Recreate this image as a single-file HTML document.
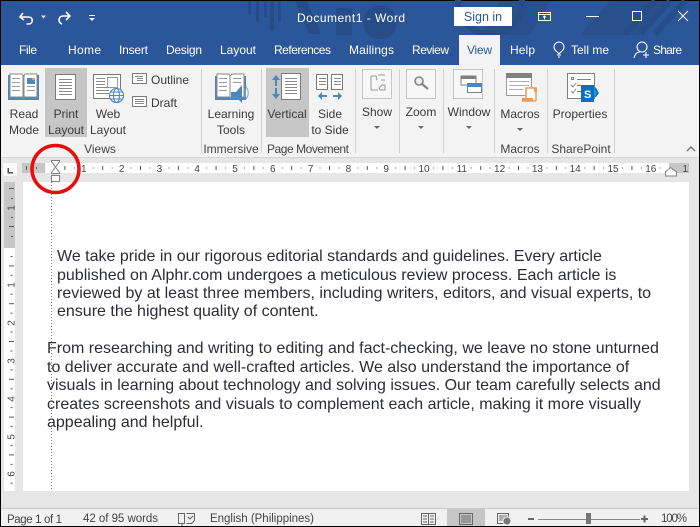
<!DOCTYPE html>
<html><head><meta charset="utf-8"><title>Document1 - Word</title>
<style>
html,body{margin:0;padding:0;background:#000;width:700px;height:527px;overflow:hidden}
svg{display:block;position:absolute;left:0;top:0}
text{font-family:"Liberation Sans",sans-serif;font-size:12px;fill:#3a3a3a}
.t{fill:#fff;font-size:12px}
.c{text-anchor:middle}
.g{font-size:12px;fill:#444}
.b{font-size:16px;fill:#2c2c38}
.s{font-size:11.500px;fill:#444}
.r{font-size:10px;fill:#444;text-anchor:middle}
.ic{fill:none;stroke:#7a7a7a;stroke-width:1}
.bl{fill:#4f86bd}
</style></head><body>
<svg width="700" height="527" viewBox="0 0 700 527" xmlns="http://www.w3.org/2000/svg" shape-rendering="crispEdges">
<defs>
<pattern id="ht" x="46" y="163" width="37.8" height="10" patternUnits="userSpaceOnUse">
<rect x="9" y="4.500" width="1" height="1" fill="#555"/><rect x="18.500" y="3" width="1" height="4" fill="#555"/><rect x="28" y="4.500" width="1" height="1" fill="#555"/>
</pattern>
<pattern id="vt" x="6" y="247" width="12" height="37.8" patternUnits="userSpaceOnUse">
<rect x="4.500" y="9" width="2" height="1" fill="#555"/><rect x="3" y="18.500" width="5" height="1" fill="#555"/><rect x="4.500" y="28" width="2" height="1" fill="#555"/>
</pattern>
</defs>
<rect x="1" y="1" width="698" height="525" fill="#e6e6e6"/>
<!-- title -->
<rect x="1" y="1" width="698" height="64" fill="#2b579a"/>
<g fill="#264d88">
<rect x="248" y="1" width="3" height="14"/><rect x="256" y="1" width="3" height="20"/><rect x="264" y="1" width="3" height="16"/><rect x="270" y="1" width="4" height="30"/><rect x="278" y="1" width="3" height="21"/><path d="M295 1h12l14 33h-12z" shape-rendering="auto"/><path d="M336 8h16v27h-16z"/>
<circle cx="380" cy="22" r="17" shape-rendering="auto"/>
<path d="M500 1h50l-20 34h-50zM610 1h60l-30 34h-60z" shape-rendering="auto" opacity=".7"/>
</g>
<g fill="none" stroke="#264d88" stroke-width="6" shape-rendering="auto"><circle cx="490" cy="2" r="32"/><path d="M640 34l30-33M655 34l30-33M625 34l30-33"/></g>
<g fill="none" stroke="#fff" stroke-width="1.600" shape-rendering="auto">
<path d="M23 13l-3 4 4 3"/><path d="M20.500 17h8c5 0 5 7 0 7h-2"/>
<path d="M66 12l4 4-4 4"/><path d="M69 16h-6c-5 0-5 7-1 8"/>
</g>
<path d="M41 15.500h5l-2.500 3z" fill="#dfe6f0" shape-rendering="auto"/>
<g fill="#fff"><rect x="89" y="15" width="6" height="1"/><path d="M89 18h6l-3 3z" shape-rendering="auto"/></g>
<text class="t" x="297" y="22" textLength="108">Document1  -  Word</text>
<rect x="454" y="7" width="58" height="19" fill="#fff"/>
<text class="c" x="483" y="21" style="fill:#2b579a;font-size:12.500px">Sign in</text>
<g fill="none" stroke="#fff"><rect x="538.500" y="12.500" width="12" height="8"/><path d="M538 14.500h13M544.500 19.500v-3M543 17.500l1.500-1.500 1.500 1.500"/>
<path d="M586 16.500h13"/><rect x="632.500" y="11.500" width="9" height="9" stroke-width="1"/><path d="M678 11l10 10M688 11l-10 10" shape-rendering="auto"/></g>
<!-- tabs -->
<rect x="1" y="65" width="698" height="92" fill="#f3f3f3"/>
<rect x="459" y="35" width="41" height="30" fill="#f3f3f3"/>
<g class="tabs">
<text class="t" x="19" y="54" textLength="18">File</text>
<text class="t" x="68" y="54" textLength="33">Home</text>
<text class="t" x="119" y="54" textLength="29">Insert</text>
<text class="t" x="166" y="54" textLength="36">Design</text>
<text class="t" x="220" y="54" textLength="36">Layout</text>
<text class="t" x="274" y="54" textLength="57">References</text>
<text class="t" x="349" y="54" textLength="45">Mailings</text>
<text class="t" x="412" y="54" textLength="37">Review</text>
<text x="467" y="54" textLength="25" style="fill:#2b579a">View</text>
<text class="t" x="510" y="54" textLength="25">Help</text>
<text class="t" x="571" y="54" textLength="38">Tell me</text>
<text class="t" x="653" y="54" textLength="29">Share</text>
</g>
<g fill="none" stroke="#fff" stroke-width="1.100" shape-rendering="auto">
<path d="M559 54c-1-2-5-3-5-7a5 5 0 0 1 10 0c0 4-4 5-5 7zM557 55h4M558 57h2"/>
<circle cx="642" cy="47" r="5"/><path d="M634 58c1-4 3-6 6-6"/><path d="M643 55h6M646 52v6"/>
</g>
<!-- selected -->
<rect x="45" y="68" width="42" height="69" fill="#c6c6c6"/>
<rect x="266" y="68" width="43" height="69" fill="#c6c6c6"/>
<!-- separators -->
<g fill="#d0d0d0"><rect x="201" y="69" width="1" height="84"/><rect x="261" y="69" width="1" height="84"/><rect x="355" y="69" width="1" height="84"/><rect x="399" y="69" width="1" height="84"/><rect x="443" y="69" width="1" height="84"/><rect x="494" y="69" width="1" height="84"/><rect x="547" y="69" width="1" height="84"/><rect x="614" y="69" width="1" height="84"/></g>
<rect x="1" y="157" width="698" height="1" fill="#d4d4d4"/>
<!-- read mode icon -->
<rect x="8" y="75" width="31" height="25" class="bl"/>
<path d="M10 74h12l1 2v22l-1-1H10zM37 74H25l-1 2v22l1-1h12z" fill="#fff" stroke="#888"/>
<g fill="#9a9a9a"><rect x="12" y="78" width="8" height="1"/><rect x="12" y="82" width="8" height="1"/><rect x="12" y="86" width="8" height="1"/><rect x="12" y="90" width="8" height="1"/><rect x="27" y="86" width="8" height="1"/><rect x="27" y="90" width="8" height="1"/></g>
<rect x="27" y="78" width="8" height="6" fill="#4f86bd"/><rect x="32" y="78" width="3" height="2" fill="#ed9a58"/>
<!-- print icon -->
<rect x="55.500" y="74.500" width="20" height="25" fill="#fff" stroke="#7a7a7a"/>
<g fill="#8a8a8a"><rect x="59" y="79" width="13" height="1"/><rect x="59" y="82" width="13" height="1"/><rect x="59" y="85" width="13" height="1"/><rect x="59" y="88" width="13" height="1"/><rect x="59" y="91" width="13" height="1"/><rect x="59" y="94" width="13" height="1"/></g>
<!-- web icon -->
<rect x="93.500" y="74.500" width="27" height="24" fill="#fff" stroke="#7a7a7a"/>
<rect x="107.500" y="77.500" width="10" height="10" fill="#fff" stroke="#9a9a9a"/>
<g fill="#8a8a8a"><rect x="96" y="78" width="9" height="1"/><rect x="96" y="81" width="9" height="1"/><rect x="96" y="84" width="9" height="1"/><rect x="96" y="87" width="13" height="1"/><rect x="96" y="90" width="13" height="1"/><rect x="96" y="93" width="13" height="1"/></g>
<g shape-rendering="auto" fill="#fff" stroke="#4f86bd" stroke-width="1.100"><circle cx="116.500" cy="95.500" r="7"/><ellipse cx="116.500" cy="95.500" rx="3" ry="7"/><path d="M109.500 95.500h14M110.500 92h12M110.500 99h12"/></g>
<!-- outline / draft -->
<rect x="132.500" y="73.500" width="14" height="10" fill="#fff" stroke="#7a7a7a"/>
<g fill="#8a8a8a"><rect x="135" y="76" width="8" height="1"/><rect x="137" y="78" width="6" height="1"/><rect x="137" y="80" width="6" height="1"/></g>
<rect x="132.500" y="96.500" width="14" height="10" fill="#fff" stroke="#7a7a7a"/>
<g fill="#8a8a8a"><rect x="135" y="99" width="9" height="1"/><rect x="135" y="101" width="9" height="1"/><rect x="135" y="103" width="9" height="1"/></g>
<!-- learning tools -->
<rect x="215" y="76" width="31" height="24" class="bl"/>
<path d="M217 74h12l1 2v22l-1-1h-12zM244 74h-12l-2 2v22l2-1h12z" fill="#fff" stroke="#888"/>
<g fill="#9a9a9a"><rect x="219" y="78" width="8" height="1"/><rect x="219" y="82" width="8" height="1"/><rect x="219" y="86" width="8" height="1"/><rect x="219" y="90" width="8" height="1"/><rect x="233" y="78" width="8" height="1"/><rect x="233" y="82" width="8" height="1"/></g>
<path d="M231 92h5l6-7v18l-6-6h-5z" fill="#4f86bd" shape-rendering="auto"/>
<path d="M244 89c2 2 2 6 0 8M246 87c3 3 3 9 0 12" fill="none" stroke="#7aa3cb" stroke-width="1" shape-rendering="auto"/>
<!-- vertical -->
<path d="M276 75l-4 5h3v6h2v-6h3zM276 99l-4-5h3v-6h2v6h3z" fill="#4f86bd" shape-rendering="auto"/>
<rect x="281.500" y="73.500" width="19" height="26" fill="#fff" stroke="#7a7a7a"/>
<g fill="#8a8a8a"><rect x="285" y="78" width="12" height="1"/><rect x="285" y="81" width="12" height="1"/><rect x="285" y="84" width="12" height="1"/><rect x="285" y="87" width="12" height="1"/><rect x="285" y="90" width="12" height="1"/><rect x="285" y="93" width="12" height="1"/></g>
<!-- side to side -->
<rect x="316.500" y="74.500" width="11" height="15" fill="#fff" stroke="#7a7a7a"/><rect x="331.500" y="74.500" width="11" height="15" fill="#fff" stroke="#7a7a7a"/>
<g fill="#8a8a8a"><rect x="319" y="78" width="7" height="1"/><rect x="319" y="81" width="7" height="1"/><rect x="319" y="84" width="7" height="1"/><rect x="334" y="78" width="7" height="1"/><rect x="334" y="81" width="7" height="1"/><rect x="334" y="84" width="7" height="1"/></g>
<path d="M318 96l4-4v3h5v2h-5v3zM342 96l-4-4v3h-5v2h5v3z" fill="#4f86bd" shape-rendering="auto"/>
<!-- show/zoom/window -->
<g fill="#f7f7f7" stroke="#c6c6c6"><rect x="362.500" y="69.500" width="29" height="29"/><rect x="406.500" y="69.500" width="29" height="29"/><rect x="453.500" y="69.500" width="29" height="29"/></g>
<path d="M371 76h5l1 3-1 1M371 76v14h7M378 75h7M381 80h4M385 85v5h-5l-1-2 3-3z" fill="none" stroke="#9a9a9a" shape-rendering="auto"/>
<circle cx="419" cy="81" r="4" fill="#eee" stroke="#858585" stroke-width="1.600" shape-rendering="auto"/><path d="M422 84l6 5" stroke="#858585" stroke-width="2.200" shape-rendering="auto"/>
<rect x="461" y="76" width="15" height="9" fill="#fff" stroke="#808080"/><rect x="461" y="76" width="15" height="3" fill="#808080"/>
<rect x="467.500" y="83.500" width="14" height="9" fill="#fff" stroke="#808080"/><rect x="467" y="83" width="15" height="4" fill="#4f86bd"/>
<g fill="#666" shape-rendering="auto"><path d="M374 126h6l-3 3zM418 126h6l-3 3zM466 126h6l-3 3zM517 128h6l-3 3z"/></g>
<!-- macros -->
<rect x="506.500" y="74.500" width="25" height="21" fill="#fff" stroke="#9a9a9a"/><rect x="506" y="73" width="26" height="5" fill="#808080"/>
<g fill="#b0b0b0"><rect x="509" y="81" width="20" height="1"/><rect x="509" y="85" width="20" height="1"/><rect x="509" y="89" width="14" height="1"/></g>
<path d="M526 88h10v12c0 1-1 1-2 1h-11c1-1 3-1 3-3z" fill="#fff" stroke="#ed9a58" stroke-width="1.500" shape-rendering="auto"/>
<rect x="522" y="98" width="11" height="3" fill="#ed9a58"/><rect x="534" y="88" width="3" height="4" fill="#ed9a58"/>
<!-- properties -->
<rect x="567.500" y="73.500" width="27" height="25" fill="#fff" stroke="#808080"/>
<g fill="none" stroke="#808080"><rect x="571.500" y="77.500" width="2" height="2"/><path d="M577 79.500h14M577 85.500h14M577 91.500h8"/></g>
<path d="M571 85l2 2 3-4M571 91l2 2 3-4" fill="none" stroke="#888" shape-rendering="auto"/>
<path d="M591 87h4l2 2 0 2 1 1-3 4-3 2z" fill="#1a9cd6" shape-rendering="auto"/>
<rect x="581" y="85" width="13" height="17" fill="#0a6fc2"/>
<text x="584" y="98" style="font-size:11px;font-weight:bold;fill:#fff">S</text>
<path d="M595 88l3 5-3 4" fill="none" stroke="#0a6fc2" stroke-width="1.500" shape-rendering="auto"/>
<!-- ribbon labels -->
<text class="c" x="24" y="118">Read</text><text class="c" x="24" y="134">Mode</text>
<text class="c" x="66" y="118">Print</text><text class="c" x="66" y="134">Layout</text>
<text class="c" x="108" y="118">Web</text><text class="c" x="108" y="134">Layout</text>
<text x="151" y="84">Outline</text><text x="151" y="107">Draft</text>
<text class="g c" x="100" y="153">Views</text>
<text class="c" x="231" y="118">Learning</text><text class="c" x="231" y="134">Tools</text>
<text class="g c" x="231" y="153">Immersive</text>
<text class="c" x="287" y="118">Vertical</text>
<text class="c" x="330" y="118">Side</text><text class="c" x="330" y="134">to Side</text>
<text class="g" x="267" y="153" textLength="82">Page Movement</text>
<text class="c" x="377" y="116">Show</text><text class="c" x="421" y="116">Zoom</text><text class="c" x="469" y="116">Window</text>
<text class="c" x="520" y="118">Macros</text><text class="c" x="580" y="118">Properties</text>
<text class="g c" x="520" y="153">Macros</text><text class="g c" x="581" y="153">SharePoint</text>
<path d="M687 151l4-4 4 4" fill="none" stroke="#777" stroke-width="1.500" shape-rendering="auto"/>
<!-- rulers -->
<rect x="3" y="163" width="14" height="13" fill="#fafafa"/><path d="M8 168v4.500h5" fill="none" stroke="#555" stroke-width="1.500"/>
<rect x="22" y="163" width="667" height="10" fill="#fff"/>
<rect x="22" y="163" width="23" height="10" fill="#c6c6c6"/>
<rect x="46" y="163" width="623" height="10" fill="url(#ht)"/>
<rect x="669" y="163" width="20" height="10" fill="#c6c6c6"/>
<g fill="#555"><rect x="26" y="166" width="1" height="4"/><rect x="31" y="166" width="1" height="4"/><rect x="36" y="167" width="1" height="2"/></g>
<g class="rn">
<text class="r" x="83.800" y="172">1</text><text class="r" x="121.600" y="172">2</text><text class="r" x="159.400" y="172">3</text><text class="r" x="197.200" y="172">4</text><text class="r" x="235" y="172">5</text><text class="r" x="272.800" y="172">6</text><text class="r" x="310.600" y="172">7</text><text class="r" x="348.400" y="172">8</text><text class="r" x="386.200" y="172">9</text><text class="r" x="424" y="172">10</text><text class="r" x="461.800" y="172">11</text><text class="r" x="499.600" y="172">12</text><text class="r" x="537.400" y="172">13</text><text class="r" x="575.200" y="172">14</text><text class="r" x="613" y="172">15</text><text class="r" x="650.800" y="172">16</text><text class="r" x="688" y="172">17</text>
</g>
<rect x="689" y="163" width="11" height="11" fill="#e6e6e6"/>
<rect x="699" y="1" width="1" height="526" fill="#000"/>
<path d="M670.500 167.500l-5 4.500v4h11v-4z" fill="#fff" stroke="#808080"/>
<!-- page -->
<rect x="23" y="182" width="666" height="309" fill="#fff"/>
<rect x="4" y="182" width="11" height="66" fill="#c6c6c6"/><rect x="4" y="248" width="11" height="243" fill="#fff"/>
<rect x="4" y="248" width="11" height="243" fill="url(#vt)"/>
<g fill="#555"><rect x="9" y="188" width="5" height="1"/><rect x="11" y="198" width="2" height="1"/><rect x="11" y="217" width="2" height="1"/><rect x="9" y="226" width="5" height="1"/><rect x="11" y="236" width="2" height="1"/></g>
<g><text class="r" transform="translate(14.500 208) rotate(-90)">1</text><text class="r" transform="translate(14.500 285) rotate(-90)">1</text><text class="r" transform="translate(14.500 323) rotate(-90)">2</text><text class="r" transform="translate(14.500 361) rotate(-90)">3</text><text class="r" transform="translate(14.500 399) rotate(-90)">4</text><text class="r" transform="translate(14.500 437) rotate(-90)">5</text><text class="r" transform="translate(14.500 474) rotate(-90)">6</text></g>
<!-- document text -->
<text class="b" x="57" y="261">We take pride in our rigorous editorial standards and guidelines. Every article</text>
<text class="b" x="57" y="280">published on Alphr.com undergoes a meticulous review process. Each article is</text>
<text class="b" x="57" y="298">reviewed by at least three members, including writers, editors, and visual experts, to</text>
<text class="b" x="57" y="316">ensure the highest quality of content.</text>
<text class="b" x="47" y="353">From researching and writing to editing and fact-checking, we leave no stone unturned</text>
<text class="b" x="47" y="372">to deliver accurate and well-crafted articles. We also understand the importance of</text>
<text class="b" x="47" y="390">visuals in learning about technology and solving issues. Our team carefully selects and</text>
<text class="b" x="47" y="409">creates screenshots and visuals to complement each article, making it more visually</text>
<text class="b" x="47" y="427">appealing and helpful.</text>
<path d="M51.500 182V491" stroke="#777" stroke-dasharray="1 2" fill="none"/>
<!-- indent marker -->
<path d="M51.500 160.500h8v1l-4 5.500 4 5.500v1h-8v-1l4-5.500-4-5.500z" fill="#fff" stroke="#808080" shape-rendering="auto"/>
<rect x="51.500" y="175.500" width="8" height="6" fill="#fff" stroke="#808080"/>
<!-- red circle -->
<circle cx="55.500" cy="169" r="23.500" fill="none" stroke="#ea0b0b" stroke-width="3.500" shape-rendering="auto"/>
<!-- status bar -->
<rect x="1" y="508" width="698" height="18" fill="#f1f1f1"/>
<rect x="1" y="508" width="698" height="1" fill="#c9c9c9"/>
<rect x="447" y="509" width="38" height="17" fill="#c6c6c6"/>
<text class="s" x="7" y="523" textLength="55">Page 1 of 1</text>
<text class="s" x="83" y="522" textLength="75">42 of 95 words</text>
<path d="M178.500 513.500h6v10h-6zM186.500 513.500h8v7l-3 3h-5M188 517l2 2 3-3M181 525h2" fill="none" stroke="#666"/>
<text class="s" x="210" y="522" textLength="104">English (Philippines)</text>
<g fill="none" stroke="#666"><rect x="421.500" y="513.500" width="14" height="11"/><path d="M428.500 513.500v11M423 516h4M423 519h4M423 522h4M430 516h4M430 519h4M430 522h4"/>
<rect x="459.500" y="513.500" width="13" height="11"/><path d="M461 516h10M461 518h10M461 520h10M461 522h10"/>
<rect x="497.500" y="513.500" width="11" height="10"/><path d="M499 516h8M499 518h8M499 520h5"/></g>
<circle cx="507" cy="521" r="4" fill="#777" stroke="#f1f1f1" shape-rendering="auto"/>
<rect x="528" y="518" width="6" height="2" fill="#666"/>
<rect x="538" y="519" width="102" height="1" fill="#888"/>
<rect x="586" y="513" width="5" height="11" fill="#777"/>
<path d="M641 519h7M644.500 515.500v7" stroke="#666" stroke-width="2" fill="none"/>
<text class="s" x="661" y="522" textLength="26">100%</text>
</svg>
</body></html>
